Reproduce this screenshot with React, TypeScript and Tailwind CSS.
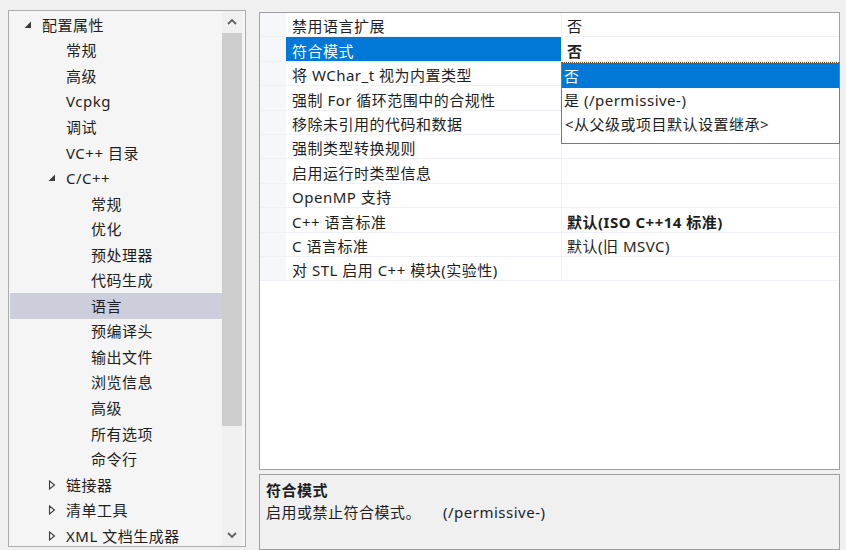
import React from "react";

type TreeItem = {
    label: string;
    level: 0 | 1 | 2;
    arrow?: "open" | "closed";
    selected?: boolean;
};

const treeItems: TreeItem[] = [
    { label: "配置属性", level: 0, arrow: "open" },
    { label: "常规", level: 1 },
    { label: "高级", level: 1 },
    { label: "Vcpkg", level: 1 },
    { label: "调试", level: 1 },
    { label: "VC++ 目录", level: 1 },
    { label: "C/C++", level: 1, arrow: "open" },
    { label: "常规", level: 2 },
    { label: "优化", level: 2 },
    { label: "预处理器", level: 2 },
    { label: "代码生成", level: 2 },
    { label: "语言", level: 2, selected: true },
    { label: "预编译头", level: 2 },
    { label: "输出文件", level: 2 },
    { label: "浏览信息", level: 2 },
    { label: "高级", level: 2 },
    { label: "所有选项", level: 2 },
    { label: "命令行", level: 2 },
    { label: "链接器", level: 1, arrow: "closed" },
    { label: "清单工具", level: 1, arrow: "closed" },
    { label: "XML 文档生成器", level: 1, arrow: "closed" },
];

const indent = {
    0: "pl-[13px]",
    1: "pl-[37px]",
    2: "pl-[62px]",
};

type PropRow = {
    name: string;
    value?: string;
    bold?: boolean;
    selected?: boolean;
};

const props: PropRow[] = [
    { name: "禁用语言扩展", value: "否" },
    { name: "符合模式", value: "否", bold: true, selected: true },
    { name: "将 WChar_t 视为内置类型" },
    { name: "强制 For 循环范围中的合规性" },
    { name: "移除未引用的代码和数据" },
    { name: "强制类型转换规则" },
    { name: "启用运行时类型信息" },
    { name: "OpenMP 支持" },
    { name: "C++ 语言标准", value: "默认(ISO C++14 标准)", bold: true },
    { name: "C 语言标准", value: "默认(旧 MSVC)" },
    { name: "对 STL 启用 C++ 模块(实验性)" },
];

function Arrow({ kind }: { kind?: "open" | "closed" }) {
    if (kind === "open") {
        return (
            <svg width="8" height="8" viewBox="0 0 8 8" className="ml-[1px]">
                <polygon points="7,0.5 7,7 0.5,7" fill="#3c3c3c" />
            </svg>
        );
    }
    if (kind === "closed") {
        return (
            <svg width="8" height="10" viewBox="0 0 8 10" className="ml-[1px]">
                <polygon points="1.5,1 6.5,5 1.5,9" fill="none" stroke="#3c3c3c" strokeWidth="1.1" />
            </svg>
        );
    }
    return null;
}

function Chevron({ up }: { up?: boolean }) {
    return (
        <svg width="10" height="6" viewBox="0 0 10 6">
            <polyline
                points={up ? "1,5 5,1 9,5" : "1,1 5,5 9,1"}
                fill="none"
                stroke="#606060"
                strokeWidth="1.8"
            />
        </svg>
    );
}

export default function App() {
    return (
        <div className="w-[846px] h-[550px] bg-[#f0f0f0] flex overflow-hidden text-[15px] tracking-[0.5px] text-[#1e1e1e] font-['Noto_Sans','Noto_Sans_CJK_SC',sans-serif]">
            {/* tree */}
            <div className="ml-[8px] mt-[10px] w-[238px] h-[537px] border border-[#adadad] bg-[#f5f5f5] flex shrink-0">
                <div className="flex-1 pt-[1px] overflow-hidden">
                    {treeItems.map((item, i) => (
                        <div
                            key={i}
                            className={`h-[25.55px] flex items-center ml-[1px] ${indent[item.level]} ${item.selected ? "bg-[#cccedb]" : ""}`}
                        >
                            <div className="w-[19px] shrink-0 flex items-center">
                                <Arrow kind={item.arrow} />
                            </div>
                            <span className="whitespace-nowrap leading-none pt-[1px]">{item.label}</span>
                        </div>
                    ))}
                </div>
                <div className="w-[20px] mr-[3px] bg-[#f0f0f0] flex flex-col shrink-0">
                    <div className="h-[22px] flex items-center justify-center">
                        <Chevron up />
                    </div>
                    <div className="h-[393px] bg-[#cdcdcd]" />
                    <div className="flex-1" />
                    <div className="h-[22px] flex items-center justify-center">
                        <Chevron />
                    </div>
                </div>
            </div>

            {/* right side */}
            <div className="ml-[13px] mt-[12px] w-[581px] flex flex-col shrink-0">
                <div className="h-[459px] border border-[#a0a0a0] bg-white relative">
                    <div className="flex flex-col">
                        {props.map((p, i) => (
                            <div key={i} className="h-[24.4px] flex border-b border-[#eef2f8]">
                                <div className="w-[26px] bg-[#f5f7fb] shrink-0" />
                                <div
                                    className={`w-[275px] shrink-0 pl-[6px] pt-[4px] flex items-center whitespace-nowrap ${p.selected ? "bg-[#0078d7] text-white" : ""}`}
                                >
                                    {p.name}
                                </div>
                                <div
                                    className={`flex-1 border-l border-[#eef2f8] pl-[5px] pt-[4px] flex items-center whitespace-nowrap ${p.bold ? "font-bold" : ""}`}
                                >
                                    {p.value}
                                </div>
                            </div>
                        ))}
                    </div>

                    {/* dropdown list */}
                    <div className="absolute left-[301px] top-[49px] w-[279px] h-[82px] bg-white border border-[#7a7a7a] border-t-0 flex flex-col">
                        <div className="h-[1px] border-t border-dotted border-[#6b4a2a]" />
                        <div className="h-[25px] bg-[#0078d7] text-white pl-[2px] pt-[2px] flex items-center">否</div>
                        <div className="h-[24px] pl-[2px] flex items-center whitespace-nowrap">是 (/permissive-)</div>
                        <div className="h-[24px] pl-[3px] flex items-center whitespace-nowrap">&lt;从父级或项目默认设置继承&gt;</div>
                    </div>
                </div>

                <div className="mt-[4px] h-[76px] border border-[#a0a0a0] bg-[#f0f0f0] pl-[6px] pt-[4px]">
                    <div className="font-bold leading-[22px]">符合模式</div>
                    <div className="leading-[22px] whitespace-nowrap">
                        启用或禁止符合模式。<span className="ml-[22px]">(/permissive-)</span>
                    </div>
                </div>
            </div>
        </div>
    );
}
